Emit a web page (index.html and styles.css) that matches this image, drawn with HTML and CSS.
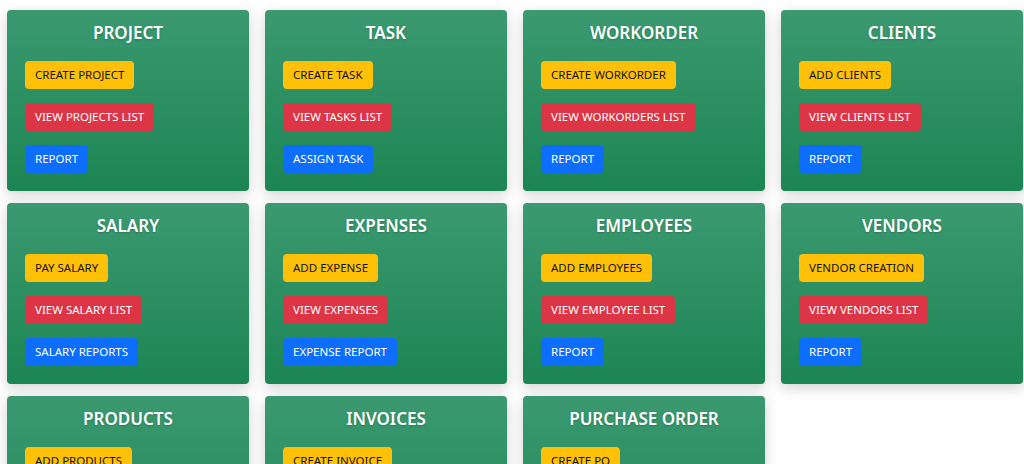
FILE: index.html
```html
<!DOCTYPE html>
<html lang="en">
<head>
  <meta charset="UTF-8" />
  <meta name="viewport" content="width=device-width, initial-scale=1.0"/>
  <title>Dashboard</title>
  <link rel="stylesheet" href="styles.css">
</head>
<body>
  <div class="dashboard">
    <div class="card">
      <h2>PROJECT</h2>
      <a href="#" class="btn btn-warning">CREATE PROJECT</a>
      <a href="#" class="btn btn-danger">VIEW PROJECTS LIST</a>
      <a href="#" class="btn btn-primary">REPORT</a>
    </div>
    <div class="card">
      <h2>TASK</h2>
      <a href="#" class="btn btn-warning">CREATE TASK</a>
      <a href="#" class="btn btn-danger">VIEW TASKS LIST</a>
      <a href="#" class="btn btn-primary">ASSIGN TASK</a>
    </div>
    <div class="card">
      <h2>WORKORDER</h2>
      <a href="#" class="btn btn-warning">CREATE WORKORDER</a>
      <a href="#" class="btn btn-danger">VIEW WORKORDERS LIST</a>
      <a href="#" class="btn btn-primary">REPORT</a>
    </div>
    <div class="card">
      <h2>CLIENTS</h2>
      <a href="#" class="btn btn-warning">ADD CLIENTS</a>
      <a href="#" class="btn btn-danger">VIEW CLIENTS LIST</a>
      <a href="#" class="btn btn-primary">REPORT</a>
    </div>

    <div class="card">
      <h2>SALARY</h2>
      <a href="#" class="btn btn-warning">PAY SALARY</a>
      <a href="#" class="btn btn-danger">VIEW SALARY LIST</a>
      <a href="#" class="btn btn-primary">SALARY REPORTS</a>
    </div>
    <div class="card">
      <h2>EXPENSES</h2>
      <a href="#" class="btn btn-warning">ADD EXPENSE</a>
      <a href="#" class="btn btn-danger">VIEW EXPENSES</a>
      <a href="#" class="btn btn-primary">EXPENSE REPORT</a>
    </div>
    <div class="card">
      <h2>EMPLOYEES</h2>
      <a href="#" class="btn btn-warning">ADD EMPLOYEES</a>
      <a href="#" class="btn btn-danger">VIEW EMPLOYEE LIST</a>
      <a href="#" class="btn btn-primary">REPORT</a>
    </div>
    <div class="card">
      <h2>VENDORS</h2>
      <a href="#" class="btn btn-warning">VENDOR CREATION</a>
      <a href="#" class="btn btn-danger">VIEW VENDORS LIST</a>
      <a href="#" class="btn btn-primary">REPORT</a>
    </div>

    <div class="card">
      <h2>PRODUCTS</h2>
      <a href="#" class="btn btn-warning">ADD PRODUCTS</a>
      <a href="#" class="btn btn-danger">VIEW PRODUCTS LIST</a>
      <a href="#" class="btn btn-primary">REPORT</a>
    </div>
    <div class="card">
      <h2>INVOICES</h2>
      <a href="#" class="btn btn-warning">CREATE INVOICE</a>
      <a href="#" class="btn btn-danger">VIEW INVOICES</a>
      <a href="#" class="btn btn-primary">REPORT</a>
    </div>
    <div class="card">
      <h2>PURCHASE ORDER</h2>
      <a href="#" class="btn btn-warning">CREATE PO</a>
      <a href="#" class="btn btn-danger">VIEW PO LIST</a>
      <a href="#" class="btn btn-primary">REPORT</a>
    </div>
  </div>
</body>
</html>
```

FILE: styles.css
```css
html, body {
  margin: 0;
  padding: 0;
  background-color: white;
  font-family: "Noto Sans", "Open Sans", sans-serif;
}

.dashboard {
  display: grid;
  grid-template-columns: repeat(4, 242px);
  column-gap: 16px;
  row-gap: 12px;
  padding: 10px 0 20px 7px;
}

.card {
  height: 181px;
  box-sizing: border-box;
  padding: 12px 18px;
  display: flex;
  flex-direction: column;
  align-items: flex-start;
  gap: 14px;
  border-radius: 4px;
  background: linear-gradient(to bottom, #3b9970, #1c8553);
  box-shadow: 0 4px 14px rgba(0, 0, 0, 0.18);
}

.card h2 {
  align-self: stretch;
  margin: 0 0 3px 0;
  text-align: center;
  color: white;
  font-size: 17px;
  font-weight: 600;
  line-height: 22px;
  text-shadow: 0 1px 2px rgba(0, 0, 0, 0.2);
}

.btn {
  display: inline-block;
  padding: 0 10px;
  height: 28px;
  line-height: 28px;
  font-size: 11.5px;
  border-radius: 4px;
  text-decoration: none;
  white-space: nowrap;
}

.btn-warning {
  background-color: #ffc107;
  color: #111;
}

.btn-danger {
  background-color: #dc3545;
  color: white;
}

.btn-primary {
  background-color: #0d6efd;
  color: white;
}
```
